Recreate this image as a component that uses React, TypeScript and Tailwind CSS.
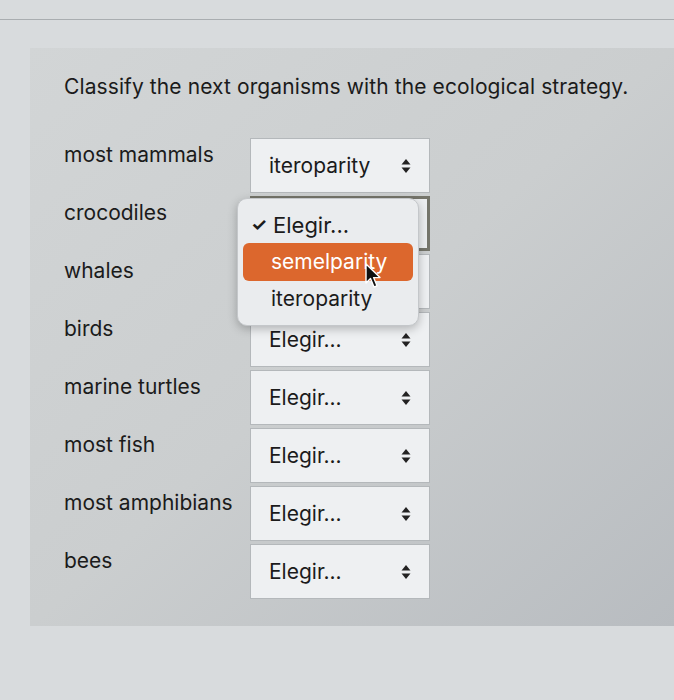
const organisms = [
  { name: "most mammals", value: "iteroparity" },
  { name: "crocodiles", value: "Elegir...", focused: true },
  { name: "whales", value: "Elegir..." },
  { name: "birds", value: "Elegir..." },
  { name: "marine turtles", value: "Elegir..." },
  { name: "most fish", value: "Elegir..." },
  { name: "most amphibians", value: "Elegir..." },
  { name: "bees", value: "Elegir..." },
];

const Chevrons = () => (
  <svg width="10" height="16" viewBox="0 0 10 16" className="shrink-0">
    <path d="M5 1 L9.5 6.5 L0.5 6.5 Z" fill="#222" />
    <path d="M5 15 L9.5 9.5 L0.5 9.5 Z" fill="#222" />
  </svg>
);

const Cursor = () => (
  <svg width="18" height="26" viewBox="0 0 18 26" className="absolute left-[127px] top-[64px]">
    <path d="M1 1 L1 20 L5.5 15.5 L9 24 L12 22.8 L8.6 14.6 L15 14.6 Z" fill="#111" stroke="#fff" strokeWidth="1.4" strokeLinejoin="round" />
  </svg>
);

const App = () => {
  return (
    <div className="relative w-[674px] h-[700px] overflow-hidden bg-[#d8dbdd] font-['Inter','Liberation_Sans',sans-serif] text-[#1b1b1b]">
      <div className="h-[20px] border-b border-[#a9adb0]" />
      <div className="ml-[30px] mt-[28px] h-[578px] bg-linear-to-br from-[#d2d5d6] via-[#cbcecf] to-[#b8bcc0] pl-[34px] pt-[25px]">
        <h1 className="text-[21px] leading-[28px] tracking-[0.1px]">
          Classify the next organisms with the ecological strategy.
        </h1>

        <div className="relative mt-[37px] flex flex-col">
          {organisms.map((o) => (
            <div key={o.name} className="flex h-[58px] items-start">
              <div className="w-[186px] pt-[4px] text-[21px] leading-[26px]">{o.name}</div>
              <div
                className={
                  o.focused
                    ? "flex h-[55px] w-[180px] items-center justify-between border-[3px] border-[#75756b] bg-[#eceef0] pl-[16px] pr-[16px] text-[21px]"
                    : "flex h-[55px] w-[180px] items-center justify-between border border-[#b4b8bb] bg-[#eef0f2] pl-[18px] pr-[18px] text-[21px]"
                }
              >
                <span>{o.value}</span>
                <Chevrons />
              </div>
            </div>
          ))}

          <div className="absolute left-[173px] top-[60px] w-[182px] rounded-[10px] border border-[#c4c7ca] bg-[#eaecee] px-[5px] py-[8px] text-[21px] leading-[26px] shadow-[0_3px_10px_rgba(0,0,0,0.25)]">
            <div className="flex h-[36px] items-center pl-[8px]">
              <span className="w-[22px] text-[18px] font-bold">✓</span>
              <span className="text-[22px]">Elegir...</span>
            </div>
            <div className="flex h-[38px] items-center rounded-[6px] bg-[#dc672d] pl-[28px] text-white">
              semelparity
            </div>
            <div className="flex h-[36px] items-center pl-[28px]">iteroparity</div>
            <Cursor />
          </div>
        </div>
      </div>
    </div>
  );
};

export default App;
